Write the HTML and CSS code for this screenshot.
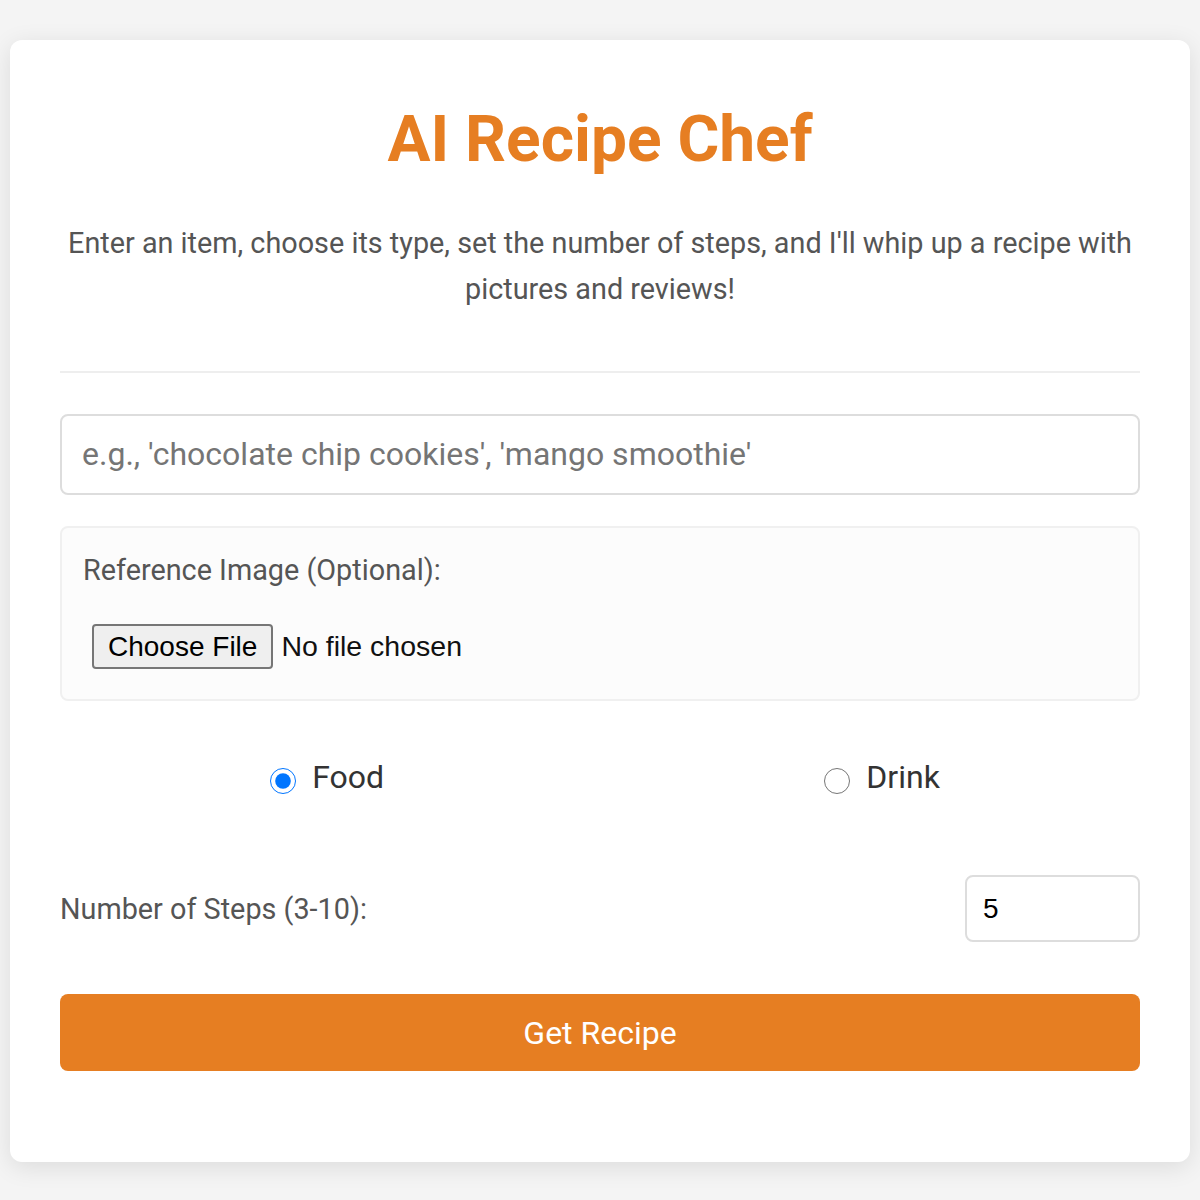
FILE: index.html
```html
<!DOCTYPE html>
<html lang="en">
<head>
    <meta charset="UTF-8">
    <meta name="viewport" content="width=device-width, initial-scale=1.0">
    <title>AI Recipe Chef</title>
    <link rel="stylesheet" href="styles.css">
</head>
<body>
  <div class="container">
    <div class="header">
        <h1>AI Recipe Chef</h1>
        <p class="subtitle">Enter an item, choose its type, set the number of steps, and I'll whip up a recipe with pictures and reviews!</p>
    </div>
    <form class="recipe-form" onsubmit="return false;">
        <input type="text" class="item-input" placeholder="e.g., 'chocolate chip cookies', 'mango smoothie'">
        <div class="file-box">
            <label class="file-label" for="ref-image">Reference Image (Optional):</label>
            <input type="file" id="ref-image" class="file-input" accept="image/*">
        </div>
        <div class="type-row">
            <label class="type-option">
                <input type="radio" name="type" value="food" checked>
                <span>Food</span>
            </label>
            <label class="type-option">
                <input type="radio" name="type" value="drink">
                <span>Drink</span>
            </label>
        </div>
        <div class="steps-row">
            <label for="steps">Number of Steps (3-10):</label>
            <input type="number" id="steps" class="steps-input" min="3" max="10" value="5">
        </div>
        <button type="submit" class="submit-btn">Get Recipe</button>
    </form>
  </div>
</body>
</html>
```

FILE: styles.css
```css
body {
    font-family: Roboto, 'Noto Sans', sans-serif;
    background-color: #f4f4f4;
    margin: 0;
    padding: 40px 10px;
    color: #333;
}
.container {
    background-color: white;
    padding: 60px 50px 91px;
    border-radius: 12px;
    box-shadow: 0 5px 25px rgba(0,0,0,0.1);
}
.header {
    text-align: center;
    padding-bottom: 59px;
    border-bottom: 2px solid #eee;
    margin-bottom: 41px;
}
h1 {
    font-size: 64px;
    line-height: 80px;
    font-weight: 700;
    color: #e67e22;
    margin: 0;
}
.subtitle {
    font-size: 28.8px;
    line-height: 46px;
    color: #555;
    margin: 40px 0 0;
}
.recipe-form {
    display: flex;
    flex-direction: column;
}
.item-input {
    font-family: inherit;
    font-size: 32px;
    line-height: 37px;
    padding: 20px 20px;
    border: 2px solid #ddd;
    border-radius: 8px;
    color: #333;
    outline: none;
}
.item-input::placeholder {
    color: #757575;
}
.file-box {
    margin-top: 31px;
    height: 175px;
    box-sizing: border-box;
    padding: 25px 21px 0;
    background-color: #fcfcfc;
    border: 2px solid #f0f0f0;
    border-radius: 8px;
}
.file-label {
    display: block;
    font-size: 28.8px;
    line-height: 34px;
    color: #555;
}
.file-input {
    display: block;
    margin: 37px 0 0 9px;
    font-family: 'Liberation Sans', Arial, sans-serif;
    font-size: 28.5px;
    color: #111;
}
.file-input::file-selector-button {
    font-family: 'Liberation Sans', Arial, sans-serif;
    font-size: 28px;
    height: 45px;
    padding: 0 14px;
    margin-right: 8px;
    background-color: #efefef;
    border: 2px solid #767676;
    border-radius: 4px;
    color: #000;
}
.type-row {
    display: flex;
    justify-content: space-around;
    margin: 58px -20px 0 -10px;
}
.type-option {
    display: flex;
    align-items: center;
    font-size: 32px;
    line-height: 36px;
    color: #333;
}
.type-option input {
    width: 26px;
    height: 26px;
    margin: 8px 16px 0 0;
    accent-color: #0075ff;
}
.steps-row {
    display: flex;
    justify-content: space-between;
    align-items: center;
    margin-top: 80px;
    font-size: 28.8px;
    color: #555;
}
.steps-input {
    width: 175px;
    height: 67px;
    box-sizing: border-box;
    padding: 0 16px;
    font-family: 'Liberation Sans', Arial, sans-serif;
    font-size: 28px;
    color: #000;
    border: 2px solid #ddd;
    border-radius: 8px;
    outline: none;
}
.submit-btn {
    margin-top: 52px;
    height: 77px;
    font-family: inherit;
    font-size: 32px;
    color: white;
    background-color: #e67e22;
    border: none;
    border-radius: 8px;
    cursor: pointer;
}
```
